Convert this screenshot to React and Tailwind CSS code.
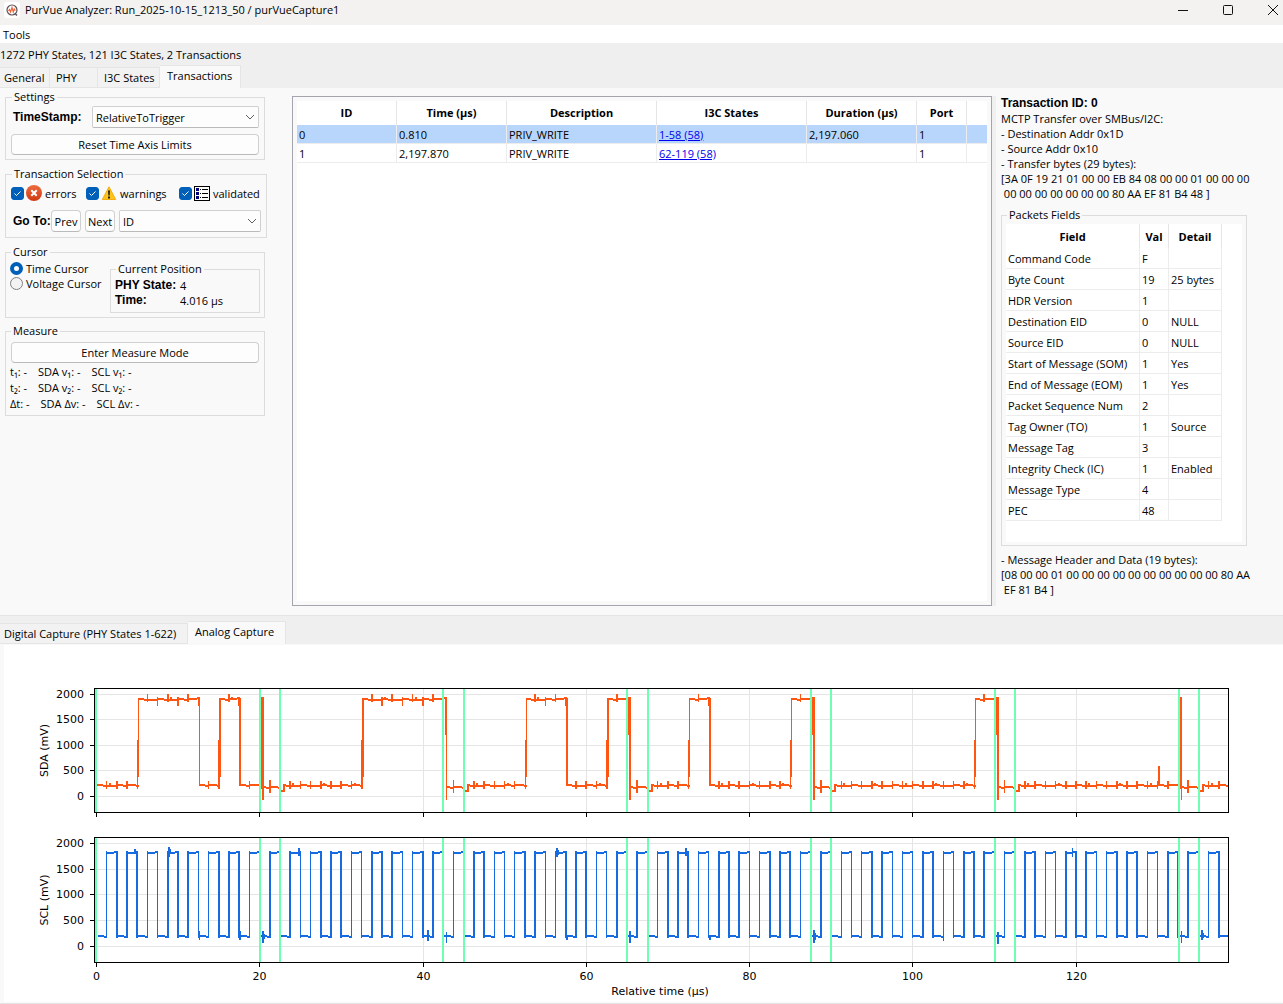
import { useId, useState } from 'react'

const transactions = [
  { id: 0, time: '0.810', description: 'PRIV_WRITE', states: '1-58 (58)', duration: '2,197.060', port: 1 },
  { id: 1, time: '2,197.870', description: 'PRIV_WRITE', states: '62-119 (58)', duration: '', port: 1 },
]

const packetFields = [
  ['Command Code', 'F', ''],
  ['Byte Count', '19', '25 bytes'],
  ['HDR Version', '1', ''],
  ['Destination EID', '0', 'NULL'],
  ['Source EID', '0', 'NULL'],
  ['Start of Message (SOM)', '1', 'Yes'],
  ['End of Message (EOM)', '1', 'Yes'],
  ['Packet Sequence Num', '2', ''],
  ['Tag Owner (TO)', '1', 'Source'],
  ['Message Tag', '3', ''],
  ['Integrity Check (IC)', '1', 'Enabled'],
  ['Message Type', '4', ''],
  ['PEC', '48', ''],
]

function Group({ title, className, children }) {
  return (
    <fieldset className={`min-w-0 border border-[#dcdcdc] ${className}`}>
      <legend className="ml-px px-[2px] leading-[14px]">{title}</legend>
      {children}
    </fieldset>
  )
}

function PushButton({ className, children }) {
  return (
    <button
      type="button"
      className={`rounded-[4px] border border-[#d0d0d0] border-b-[#bababa] bg-[#fdfdfd] text-center ${className}`}
    >
      {children}
    </button>
  )
}

function Select({ id, label, options, className }) {
  return (
    <div className={`relative ${className}`}>
      <select
        id={id}
        aria-label={label}
        className="block h-[22px] w-full appearance-none rounded-[2px] border border-[#d0d0d0] border-b-[#bababa] bg-[#fdfdfd] pl-[3px] pr-5"
      >
        {options.map((option) => (
          <option key={option}>{option}</option>
        ))}
      </select>
      <svg className="pointer-events-none absolute right-1 top-2 h-[6px] w-[10px]" viewBox="0 0 10 6" fill="none" stroke="#606060">
        <path d="M1 1l4 4 4-4" />
      </svg>
    </div>
  )
}

function CheckOption({ label, icon, className }) {
  return (
    <label className={`flex items-center ${className}`}>
      <span className="relative h-[13px] w-[13px] shrink-0">
        <input
          type="checkbox"
          defaultChecked
          className="peer block h-[13px] w-[13px] appearance-none rounded-[3px] border border-gray-500 checked:border-[#005fb8] checked:bg-[#005fb8]"
        />
        <svg className="pointer-events-none absolute left-0 top-0 hidden peer-checked:block" width="13" height="13" viewBox="0 0 13 13" fill="none" stroke="#fff">
          <path d="M3.5 6.5l2 2 4-4" />
        </svg>
      </span>
      <span className="ml-[2px] mr-[3px] shrink-0">{icon}</span>
      {label}
    </label>
  )
}

function RadioOption({ name, label, ...rest }) {
  return (
    <label className="flex items-center gap-[3px] leading-[15px]">
      <input
        type="radio"
        name={name}
        className="h-[13px] w-[13px] appearance-none rounded-full border border-[#808080] bg-[#f3f3f3] checked:border-4 checked:border-[#005fb8] checked:bg-white"
        {...rest}
      />
      {label}
    </label>
  )
}

function ErrorIcon() {
  return (
    <svg width="16" height="16" viewBox="0 0 16 16">
      <defs>
        <linearGradient id="errorFill" x1="0" y1="0" x2="0" y2="1">
          <stop offset="0" stopColor="#ee6a3e" />
          <stop offset="1" stopColor="#cf3a12" />
        </linearGradient>
      </defs>
      <circle cx="8" cy="8" r="8" fill="url(#errorFill)" />
      <path d="M5.3 5.3l5.4 5.4M10.7 5.3l-5.4 5.4" stroke="#fff" strokeWidth="2" />
    </svg>
  )
}

function WarningIcon() {
  return (
    <svg width="16" height="16" viewBox="0 0 16 16">
      <path d="M8 1.8L14.7 14.5H1.3z" fill="#fdc21b" stroke="#f5ae10" strokeLinejoin="round" />
      <path d="M7 5.5h2l-.3 5H7.3zM7 11.5h2v2H7z" fill="#222" />
    </svg>
  )
}

function ValidatedIcon() {
  return (
    <svg width="16" height="15" viewBox="0 0 16 15" shapeRendering="crispEdges">
      <rect x=".5" y=".5" width="15" height="14" fill="#fff" stroke="#000" />
      <path d="M2 2h3v3H2zM2 6h3v3H2zM2 10h3v3H2z" fill="#00007b" />
      <path d="M6 3.5h1M8 3.5h6M6 7.5h1M8 7.5h6M6 11.5h1M8 11.5h6" stroke="#000" />
    </svg>
  )
}

function TitleBar() {
  return (
    <header className="flex h-[25px] items-start justify-between bg-[#f3f2f1]">
      <div className="flex items-center pl-1 pt-px">
        <svg width="16" height="16" viewBox="0 0 16 16" fill="none">
          <rect width="16" height="16" rx="3" fill="#fff" />
          <circle cx="8" cy="8" r="5" stroke="#5b5256" strokeWidth="1.2" />
          <path d="M11 11.5l2 2" stroke="#5b5256" strokeWidth="1.4" />
          <path d="M4.5 9l1-1.5 1 2.5 1.5-4.5 1.3 4.5 1-3 1 1.5" stroke="#f0653a" strokeWidth="1.2" />
        </svg>
        <h1 className="ml-[5px] leading-[18px]">PurVue Analyzer: Run_2025-10-15_1213_50 / purVueCapture1</h1>
      </div>
      <div className="flex h-[19px] items-center gap-[25px]">
        <button type="button" aria-label="Minimize" className="flex h-5 w-5 items-center justify-center">
          <svg width="10" height="10" viewBox="0 0 10 10" stroke="#111" shapeRendering="crispEdges">
            <path d="M0 5.5h10" />
          </svg>
        </button>
        <button type="button" aria-label="Maximize" className="flex h-5 w-5 items-center justify-center">
          <svg width="10" height="10" viewBox="0 0 10 10" fill="none" stroke="#111">
            <rect x=".5" y=".5" width="9" height="9" rx="1" />
          </svg>
        </button>
        <button type="button" aria-label="Close" className="flex h-5 w-5 items-center justify-center">
          <svg width="10" height="10" viewBox="0 0 10 10" stroke="#111">
            <path d="M0 0l10 10M10 0L0 10" />
          </svg>
        </button>
      </div>
    </header>
  )
}

function Tab({ active, className, children }) {
  return (
    <button
      type="button"
      role="tab"
      aria-selected={active}
      className={`whitespace-nowrap border-r border-t border-[#e5e5e5] text-left ${
        active ? 'h-[23px] bg-[#f9f9f9] pb-1 pl-[7px]' : 'h-[21px] border-b bg-[#f2f2f2] pl-1'
      } ${className}`}
    >
      {children}
    </button>
  )
}

function ControlPanel() {
  const stampId = useId()

  return (
    <aside className="w-[262px] shrink-0 pt-[2px]">
      <Group title="Settings" className="mr-[2px] px-[5px] pb-1 pt-[2px]">
        <div className="flex items-center">
          <label htmlFor={stampId} className="w-[81px] pl-[2px] font-[Liberation_Sans] text-[12px] font-bold">
            TimeStamp:
          </label>
          <Select id={stampId} options={['RelativeToTrigger', 'Absolute']} className="flex-1" />
        </div>
        <PushButton className="mt-[6px] h-[21px] w-full">Reset Time Axis Limits</PushButton>
      </Group>

      <Group title="Transaction Selection" className="mt-[7px] px-[5px] pb-[5px]">
        <div className="flex h-6 items-center">
          <CheckOption label="errors" icon={<ErrorIcon />} className="w-[75px]" />
          <CheckOption label="warnings" icon={<WarningIcon />} className="w-[93px]" />
          <CheckOption label="validated" icon={<ValidatedIcon />} />
        </div>
        <div className="mt-[5px] flex items-center">
          <span className="w-10 pl-[2px] font-[Liberation_Sans] text-[12px] font-bold">Go To:</span>
          <PushButton className="mr-1 h-[22px] w-[30px]">Prev</PushButton>
          <PushButton className="mr-1 h-[22px] w-[30px]">Next</PushButton>
          <Select label="Go to field" options={['ID', 'Time']} className="flex-1" />
        </div>
      </Group>

      <Group title="Cursor" className="mr-[2px] mt-[7px] px-1 pb-1">
        <div className="flex justify-between">
          <div className="pt-[2px]">
            <RadioOption name="cursor" label="Time Cursor" defaultChecked />
            <RadioOption name="cursor" label="Voltage Cursor" />
          </div>
          <Group title="Current Position" className="mt-[3px] w-[150px] px-1 pb-1 pt-[2px]">
            <dl className="grid grid-cols-[65px_1fr] leading-[15px]">
              <dt className="font-[Liberation_Sans] text-[12px] font-bold">PHY State:</dt>
              <dd>4</dd>
              <dt className="font-[Liberation_Sans] text-[12px] font-bold">Time:</dt>
              <dd>4.016 µs</dd>
            </dl>
          </Group>
        </div>
      </Group>

      <Group title="Measure" className="mr-[2px] mt-[6px] px-1 pb-[3px] pt-1">
        <div className="px-px">
          <PushButton className="h-[21px] w-full">Enter Measure Mode</PushButton>
        </div>
        <div className="mt-px leading-[16px]">
          <p className="flex gap-[11px]"><span>t₁: -</span><span>SDA v₁: -</span><span>SCL v₁: -</span></p>
          <p className="flex gap-[11px]"><span>t₂: -</span><span>SDA v₂: -</span><span>SCL v₂: -</span></p>
          <p className="flex gap-[11px]"><span>Δt: -</span><span>SDA Δv: -</span><span>SCL Δv: -</span></p>
        </div>
      </Group>
    </aside>
  )
}

function TransactionTable({ selected, onSelect }) {
  const cell = 'border-b border-r border-[#ececec] px-[2px]'

  return (
    <div className="h-[510px] min-w-0 flex-1 border border-[#a5a5ad] p-1 shadow-[4px_0_0_#f0f0f0]">
      <div className="h-full bg-white">
        <table className="w-full table-fixed border-separate border-spacing-0">
          <colgroup>
            <col className="w-[100px]" />
            <col className="w-[110px]" />
            <col className="w-[150px]" />
            <col className="w-[150px]" />
            <col className="w-[110px]" />
            <col className="w-[50px]" />
            <col />
          </colgroup>
          <thead>
            <tr className="h-6">
              {['ID', 'Time (µs)', 'Description', 'I3C States', 'Duration (µs)', 'Port'].map((name) => (
                <th key={name} className="border-r border-[#e5e5e5] pb-[2px] font-bold">{name}</th>
              ))}
              <td />
            </tr>
          </thead>
          <tbody>
            {transactions.map((row) => (
              <tr
                key={row.id}
                onClick={() => onSelect(row.id)}
                className={row.id === selected ? 'h-[19px] bg-[#b8d6fb]' : 'h-[19px]'}
              >
                <td className={cell}>{row.id}</td>
                <td className={cell}>{row.time}</td>
                <td className={cell}>{row.description}</td>
                <td className={cell}>
                  <a href="#states" className="text-[#0000ee] underline">{row.states}</a>
                </td>
                <td className={cell}>{row.duration}</td>
                <td className={cell}>{row.port}</td>
                <td className="border-b border-[#ececec]" />
              </tr>
            ))}
          </tbody>
        </table>
      </div>
    </div>
  )
}

function DetailPanel() {
  const cell = 'border-b border-r border-[#ececec] px-[2px]'

  return (
    <section className="w-[246px] shrink-0 leading-[15px]">
      <h2 className="font-[Liberation_Sans] text-[12px] font-bold leading-[15px]">Transaction ID: 0</h2>
      <p>MCTP Transfer over SMBus/I2C:</p>
      <p>- Destination Addr 0x1D</p>
      <p>- Source Addr 0x10</p>
      <p>- Transfer bytes (29 bytes):</p>
      <p className="whitespace-pre">[3A 0F 19 21 01 00 00 EB 84 08 00 00 01 00 00 00</p>
      <p className="whitespace-pre"> 00 00 00 00 00 00 00 80 AA EF 81 B4 48 ]</p>

      <Group title="Packets Fields" className="mt-[7px] px-1 pb-[3px] pt-[2px]">
        <div className="h-[318px] bg-white">
          <table className="table-fixed border-separate border-spacing-0">
            <colgroup>
              <col className="w-[134px]" />
              <col className="w-[29px]" />
              <col className="w-[53px]" />
            </colgroup>
            <thead>
              <tr className="h-6">
                <th className="border-r border-[#e5e5e5] font-bold">Field</th>
                <th className="border-r border-[#e5e5e5] font-bold">Val</th>
                <th className="border-r border-[#e5e5e5] font-bold">Detail</th>
              </tr>
            </thead>
            <tbody>
              {packetFields.map(([field, value, detail]) => (
                <tr key={field} className="h-[21px] whitespace-nowrap">
                  <td className={cell}>{field}</td>
                  <td className={cell}>{value}</td>
                  <td className={cell}>{detail}</td>
                </tr>
              ))}
            </tbody>
          </table>
        </div>
      </Group>

      <p className="mt-[6px]">- Message Header and Data (19 bytes):</p>
      <p className="whitespace-pre">[08 00 00 01 00 00 00 00 00 00 00 00 00 00 80 AA</p>
      <p className="whitespace-pre"> EF 81 B4 ]</p>
    </section>
  )
}

// Plot geometry, in viewBox units
const LEFT = 90.5
const RIGHT = 1224.5
const ORIGIN = 92.5
const US = 8.163 // units per microsecond
const HALF = 10.205 // half a clock period
const FIRST_EDGE = 102.7

const xTicks = [0, 20, 40, 60, 80, 100, 120]
const markers = [92, 256, 276, 439, 460, 623, 644, 807, 827, 991, 1011, 1175, 1195]

// SDA level from each x onwards; "ack" is the ninth bit, driven by the target
const sdaLevels = [
  [92, 'low'], [134.5, 'high'], [195.6, 'low'], [216, 'high'], [236, 'low'], [258, 'high'], [259, 'ack'],
  [277, 'low'], [359, 'high'], [442.5, 'ack'], [461, 'low'], [522.5, 'high'], [563, 'low'], [604, 'high'],
  [626, 'ack'], [645, 'low'], [685.8, 'high'], [706, 'low'], [787.8, 'high'], [810, 'ack'], [828, 'low'],
  [971.5, 'high'], [994, 'ack'], [1012, 'low'], [1177, 'high'], [1177.6, 'ack'], [1196, 'low'],
]
const levelY = { high: 54, low: 140, ack: 142 }

// Collects pixel-aligned strokes, one or two units wide
function createTrace() {
  let thin = ''
  let thick = ''
  return {
    v(x, from, to) {
      if ((x + 0.1) % 1 < 0.55) thick += `M${Math.round(x)} ${from}V${to}`
      else thin += `M${Math.floor(x) + 0.5} ${from}V${to}`
    },
    h(from, to, y) {
      thick += `M${from} ${y}H${to}`
    },
    paths: () => ({ thin, thick }),
  }
}

function buildSda() {
  const trace = createTrace()
  const edges = []
  for (let x = FIRST_EDGE; x < RIGHT; x += HALF) edges.push(x)

  sdaLevels.forEach(([start, level], i) => {
    const end = i + 1 < sdaLevels.length ? sdaLevels[i + 1][0] : RIGHT
    const previous = i > 0 ? sdaLevels[i - 1][1] : level
    const y = levelY[level]
    let x = start

    if (level === 'high') {
      trace.v(start, 53, 132)
      trace.v(start - 1, 95, 144)
    } else if (level === 'ack') {
      trace.v(start - 0.6, 52, 90)
      trace.v(start + 0.2, 52, 155)
    } else if (previous === 'high') {
      trace.v(start - 1, 52, 61)
      trace.v(start, 53, 141)
    } else if (previous === 'ack') {
      trace.h(start, start + 3, 146)
      trace.v(start + 3, 139, 147)
      x += 3
    }

    edges.forEach((edge, k) => {
      if (edge < start + 4 || edge > end - 4) return
      trace.h(x, edge - 4, y + (k % 2))
      trace.h(edge - 4, edge, y + 1)
      if (level === 'high') trace.v(edge, k % 2 ? 52 : 49, k % 2 ? 61 : 57)
      else if (level === 'low') trace.v(edge, 136, 144)
      else trace.v(edge, 135, 148)
      if (k % 3 === 0) trace.h(edge + 2, edge + 4, y - 1)
      x = edge
    })
    if (end - x > 2) {
      trace.h(x, end - 3, y)
      trace.h(end - 3, end, y + (level === 'high' ? -1 : 1))
    }
  })
  trace.v(1155, 121, 140)
  return trace.paths()
}

// [x, top, bottom] of the isolated glitches on the clock
const sclGlitches = [
  [165, 202, 212], [166.5, 204, 209], [295, 203, 211], [553, 203, 212], [554.6, 205, 210],
  [682, 203, 211], [1068.6, 203, 212], [424, 285, 296], [131, 204, 209], [195.6, 286, 295],
  [236, 286, 295], [259, 286, 298], [260.6, 289, 294], [442.6, 287, 298], [626, 286, 298],
  [810, 285, 298], [811.6, 288, 295], [939.6, 286, 296], [994, 287, 299], [1177.6, 286, 298],
  [1198, 285, 295], [1199.6, 288, 293], [563, 290, 295], [706, 290, 295],
]

function buildScl() {
  const trace = createTrace()
  let high = false
  let from = ORIGIN + 1
  for (let x = FIRST_EDGE; x < RIGHT; x += HALF) {
    trace.v(x, 206, 293)
    if (high) {
      trace.h(from, x - 3, 208)
      trace.h(x - 3, x, 207)
    } else {
      trace.h(from, x - 3, 291)
      trace.h(x - 3, x, 292)
    }
    high = !high
    from = x
  }
  trace.h(from, RIGHT, 291)
  sclGlitches.forEach(([x, top, bottom]) => trace.v(x, top, bottom))
  return trace.paths()
}

const sda = buildSda()
const scl = buildScl()

function Trace({ paths, color }) {
  return (
    <g stroke={color} shapeRendering="crispEdges">
      <path d={paths.thin} />
      <path d={paths.thick} strokeWidth="2" />
    </g>
  )
}

function Axes({ top, bottom, zero, step, label, showNumbers }) {
  const yTicks = [0, 1, 2, 3, 4].map((i) => ({ value: i * 500, y: Math.floor(zero - i * step) + 0.5 }))
  const columns = xTicks.map((t) => ({ value: t, x: Math.floor(ORIGIN + t * US) + 0.5 }))

  return (
    <g>
      <g stroke="#e5e5e5" shapeRendering="crispEdges">
        {columns.map(({ value, x }) => (
          <path key={value} d={`M${x} ${top}V${bottom}`} />
        ))}
        {yTicks.map(({ value, y }) => (
          <path key={value} d={`M${LEFT} ${y}H${RIGHT}`} />
        ))}
      </g>
      <g stroke="#000" shapeRendering="crispEdges">
        {columns.map(({ value, x }) => (
          <path key={value} d={`M${x} ${bottom}v4.5`} />
        ))}
        {yTicks.map(({ value, y }) => (
          <path key={value} d={`M${LEFT - 4.5} ${y}H${LEFT}`} />
        ))}
      </g>
      {yTicks.map(({ value, y }) => (
        <text key={value} x="80" y={y + 3.5} textAnchor="end">{value}</text>
      ))}
      {showNumbers &&
        columns.map(({ value, x }) => (
          <text key={value} x={x} y={bottom + 17} textAnchor="middle">{value}</text>
        ))}
      <text transform={`translate(44 ${(top + bottom) / 2}) rotate(-90)`} textAnchor="middle">{label}</text>
    </g>
  )
}

function Frame({ top, bottom }) {
  return (
    <g shapeRendering="crispEdges" fill="none">
      {markers.map((x) => (
        <path key={x} d={`M${x} ${top}V${bottom}`} stroke="#6effb4" strokeWidth="2" />
      ))}
      <rect x={LEFT} y={top} width={RIGHT - LEFT} height={bottom - top} stroke="#000" />
    </g>
  )
}

function AnalogCapture() {
  return (
    <svg
      viewBox="0 0 1279 357"
      className="block h-auto w-full bg-white font-['DejaVu_Sans'] text-[11px]"
      role="img"
      aria-label="Analog capture"
    >
      <Axes top={43.5} bottom={167.5} zero={151.5} step={25.6} label="SDA (mV)" />
      <Trace paths={sda} color="#ff5512" />
      <Frame top={43.5} bottom={167.5} />

      <Axes top={192.5} bottom={317.5} zero={301.5} step={25.8} label="SCL (mV)" showNumbers />
      <Trace paths={scl} color="#176be0" />
      <Frame top={192.5} bottom={317.5} />
      <text x="656" y="350" textAnchor="middle">Relative time (µs)</text>
    </svg>
  )
}

export default function App() {
  const [selected, setSelected] = useState(0)

  return (
    <div className="min-h-screen bg-[#f9f9f9] font-['Open_Sans',sans-serif] text-[11px] leading-[15px] text-black">
      <TitleBar />
      <nav className="flex h-[18px] items-center bg-white pl-[3px]">
        <button type="button">Tools</button>
      </nav>

      <div className="bg-[#efefef]">
        <p className="h-[22px] pt-1">1272 PHY States, 121 I3C States, 2 Transactions</p>
        <div role="tablist" className="flex items-end">
          <Tab className="w-[50px]">General</Tab>
          <Tab className="w-12 pl-[6px]">PHY</Tab>
          <Tab className="w-[62px] pl-[6px]">I3C States</Tab>
          <Tab active className="w-[81px]">Transactions</Tab>
        </div>
      </div>

      <main className="flex border-b border-[#e5e5e5] pb-[9px] pl-[5px] pr-9">
        <ControlPanel />
        <div className="flex min-w-0 flex-1 gap-[9px] pl-[25px] pt-2">
          <TransactionTable selected={selected} onSelect={setSelected} />
          <DetailPanel />
        </div>
      </main>

      <div role="tablist" className="flex items-end bg-[#efefef] pt-[5px]">
        <Tab className="w-[188px]">Digital Capture (PHY States 1-622)</Tab>
        <Tab active className="w-[98px]">Analog Capture</Tab>
      </div>
      <div className="border-b border-[#e5e5e5] pb-px pl-1 pt-px">
        <AnalogCapture />
      </div>
    </div>
  )
}
